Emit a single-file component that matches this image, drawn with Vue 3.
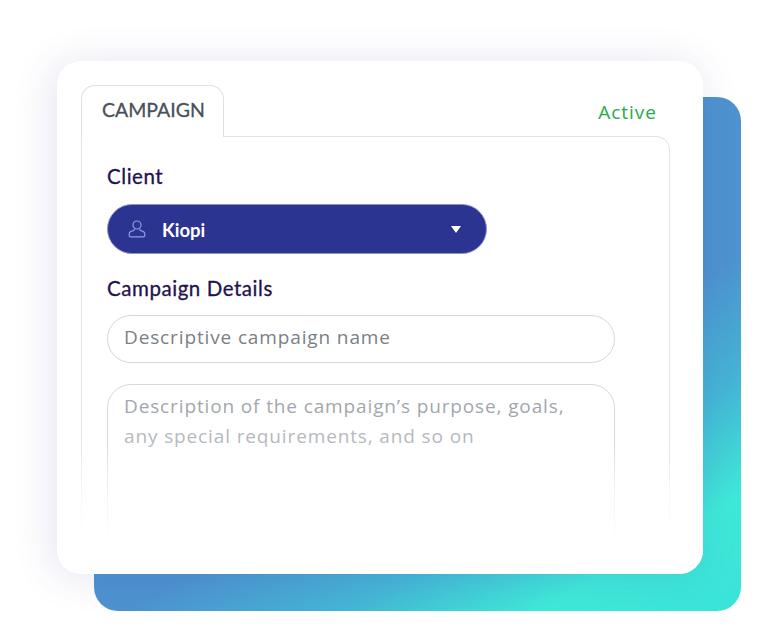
<script setup>
const title = 'CAMPAIGN'
</script>

<template>
  <div class="stage">
    <div class="backdrop"></div>
    <div class="card">
      <div class="tabs">
        <div class="tab">{{ title }}</div>
        <div class="status">Active</div>
      </div>
      <div class="panel">
        <div class="label">Client</div>
        <div class="select">
          <svg class="user" viewBox="0 0 18 18" width="18" height="18" fill="none" stroke="#8c9ee2" stroke-width="1.2">
            <circle cx="9" cy="5" r="4" />
            <path d="M6.2 9 V9.6 C6.2 10.4 5.6 10.7 4.8 10.8 C2.8 11.1 1.2 12 1.2 14 V15.2 C1.2 16.2 1.9 16.8 2.8 16.8 H15.2 C16.1 16.8 16.8 16.2 16.8 15.2 V14 C16.8 12 15.2 11.1 13.2 10.8 C12.4 10.7 11.8 10.4 11.8 9.6 V9" />
          </svg>
          <span class="client">Kiopi</span>
          <span class="caret"></span>
        </div>
        <div class="label details">Campaign Details</div>
        <div class="input">Descriptive campaign name</div>
        <div class="textarea">Description of the campaign’s purpose, goals,<br /><span class="second">any special requirements, and so on</span></div>
      </div>
      <div class="fade"></div>
    </div>
  </div>
</template>

<style scoped>
.stage {
  position: relative;
  width: 768px;
  height: 641px;
  padding: 61px 0 0 57px;
  box-sizing: border-box;
  overflow: hidden;
  background: #fff;
  font-family: Lato, "Liberation Sans", sans-serif;
}
.backdrop {
  position: absolute;
  left: 94px;
  top: 97px;
  width: 647px;
  height: 514px;
  border-radius: 24px;
  background: linear-gradient(150deg, #4d93cf 0%, #4d93cf 60%, #45b5d5 74%, #3fe9d8 87%, #3ae3d8 100%);
}
.card {
  position: relative;
  width: 646px;
  height: 513px;
  box-sizing: border-box;
  padding: 24px 33px 0 24px;
  background: #fff;
  border-radius: 24px;
  box-shadow: -4px 2px 38px rgba(70, 70, 170, 0.15);
  overflow: hidden;
}
.tabs {
  display: flex;
  justify-content: space-between;
  align-items: flex-end;
  height: 52px;
}
.tab {
  position: relative;
  z-index: 1;
  box-sizing: border-box;
  width: 143px;
  height: 52px;
  padding: 10px 0 0 20px;
  border: 1px solid #dfe0e4;
  border-bottom: 0;
  border-radius: 14px 14px 0 0;
  background: #fff;
  font-size: 19.5px;
  font-weight: 400;
  -webkit-text-stroke: 0.3px #4a4f5a;
  line-height: 28px;
  color: #4a4f5a;
}
.status {
  margin: 0 13px 13px 0;
  font-family: "Open Sans", sans-serif;
  font-size: 19px;
  letter-spacing: 1px;
  line-height: 24px;
  color: #27ab4a;
}
.panel {
  box-sizing: border-box;
  height: 412px;
  margin-top: -1px;
  padding: 25px 55px 0 25px;
  border: 1px solid #e2e3e7;
  border-bottom: 0;
  border-radius: 0 14px 0 0;
}
.label {
  font-size: 20.5px;
  font-weight: 400;
  -webkit-text-stroke: 0.3px #24124d;
  letter-spacing: 0.55px;
  line-height: 28px;
  color: #24124d;
}
.select {
  display: flex;
  align-items: center;
  width: 380px;
  height: 50px;
  margin-top: 14px;
  box-sizing: border-box;
  padding: 0 25px 0 20px;
  border-radius: 25px;
  background: #2b3490;
  border: 1px solid #8f93c6;
}
.client {
  margin-left: 16px;
  flex: 1;
  font-size: 18.5px;
  font-weight: 700;
  line-height: 26px;
  padding-top: 1px;
  color: #fff;
}
.caret {
  width: 0;
  height: 0;
  border-left: 5.5px solid transparent;
  border-right: 5.5px solid transparent;
  border-top: 7px solid #fff;
}
.details {
  margin-top: 20px;
}
.input,
.textarea {
  box-sizing: border-box;
  width: 508px;
  border: 1.5px solid #d3d7e0;
  font-family: "Open Sans", sans-serif;
  font-size: 19px;
  letter-spacing: 0.87px;
}
.input {
  height: 48px;
  margin-top: 13px;
  padding-left: 16px;
  line-height: 43px;
  border-radius: 24px;
  color: #7a8087;
}
.textarea {
  height: 167px;
  margin-top: 21px;
  padding: 6px 16px 0;
  line-height: 30px;
  border-radius: 24px;
  color: #a2a7ad;
}
.second {
  color: #b5b9be;
}
.fade {
  position: absolute;
  left: 0;
  right: 0;
  bottom: 0;
  height: 134px;
  background: linear-gradient(to bottom, rgba(255, 255, 255, 0), rgba(255, 255, 255, 0.75) 40%, rgba(255, 255, 255, 0.96) 75%, rgba(255, 255, 255, 0.96));
}
</style>
